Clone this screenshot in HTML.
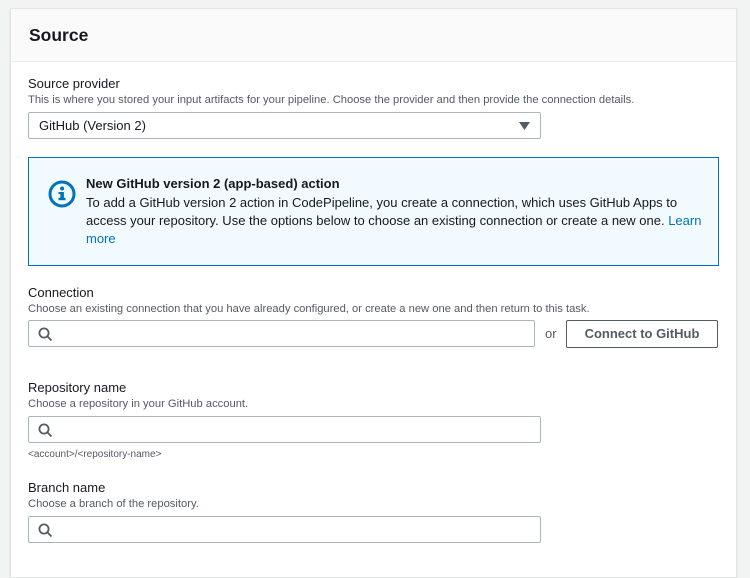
<!DOCTYPE html>
<html><head><meta charset="utf-8"><style>
*{margin:0;padding:0;box-sizing:border-box}
body{width:750px;height:559px;background:#f2f3f3;font-family:"Liberation Sans",sans-serif;color:#16191f;position:relative;overflow:hidden}
.panel{position:absolute;left:10px;top:8px;width:727px;height:570px;background:#fff;border:1px solid #e3e5e5;box-shadow:0 1px 1px rgba(0,28,36,.2)}
.hdr{position:absolute;left:0;top:0;right:0;height:53px;background:#fafafa;border-bottom:1px solid #eaeded}
.a{position:absolute;white-space:nowrap}
.h{left:18px;top:16px;font-size:17.5px;font-weight:bold}
.lbl{font-size:13px}
.desc{font-size:11.2px;color:#545b64}
.inp{position:absolute;height:27px;border:1px solid #aab7b8;border-radius:2px;background:#fff}
.inp svg{position:absolute;left:9px;top:6px}
</style></head><body>
<div class="panel">
<div class="hdr"><div class="a h">Source</div></div>
</div>
<div class="a lbl" style="left:28px;top:76px">Source provider</div>
<div class="a desc" style="left:28px;top:94px">This is where you stored your input artifacts for your pipeline. Choose the provider and then provide the connection details.</div>
<div class="inp" style="left:28px;top:112px;width:513px"><span class="a" style="left:10px;top:5px;font-size:13px">GitHub (Version 2)</span><svg style="left:490px;top:9px" width="11" height="8" viewBox="0 0 11 8"><path d="M0 0H11L5.5 8Z" fill="#545b64"/></svg></div>

<div class="a" style="left:28px;top:157px;width:691px;height:109px;background:#f1faff;border:1px solid #0073bb"></div>
<svg class="a" style="left:48px;top:180px" width="28" height="28" viewBox="0 0 28 28"><circle cx="14" cy="14" r="12" fill="none" stroke="#0073bb" stroke-width="3"/><rect x="12.3" y="12" width="3.6" height="8" fill="#0073bb"/><rect x="10.5" y="17.8" width="7" height="2.4" fill="#0073bb"/><rect x="10.5" y="12" width="3" height="2" fill="#0073bb"/><circle cx="14.1" cy="8.5" r="2" fill="#0073bb"/></svg>
<div class="a" style="left:86px;top:176px;font-size:13px;font-weight:bold">New GitHub version 2 (app-based) action</div>
<div class="a" style="left:86px;top:194px;font-size:13px;line-height:18px;white-space:normal;width:622px">To add a GitHub version 2 action in CodePipeline, you create a connection, which uses GitHub Apps to access your repository. Use the options below to choose an existing connection or create a new one. <span style="color:#0073bb">Learn more</span></div>

<div class="a lbl" style="left:28px;top:285px">Connection</div>
<div class="a desc" style="left:28px;top:303px">Choose an existing connection that you have already configured, or create a new one and then return to this task.</div>
<div class="inp" style="left:28px;top:320px;width:507px"><svg width="15" height="15" viewBox="0 0 15 15"><circle cx="6" cy="6" r="4.6" fill="none" stroke="#545b64" stroke-width="1.8"/><path d="M9.3 9.3L13.5 13.5" stroke="#545b64" stroke-width="1.8"/></svg></div>
<div class="a" style="left:545px;top:326px;font-size:13px;color:#545b64">or</div>
<div class="a" style="left:566px;top:320px;width:152px;height:28px;border:1px solid #545b64;border-radius:2px;font-size:13px;font-weight:bold;color:#545b64;text-align:center;line-height:26px">Connect to GitHub</div>

<div class="a lbl" style="left:28px;top:380px">Repository name</div>
<div class="a desc" style="left:28px;top:398px">Choose a repository in your GitHub account.</div>
<div class="inp" style="left:28px;top:416px;width:513px"><svg width="15" height="15" viewBox="0 0 15 15"><circle cx="6" cy="6" r="4.6" fill="none" stroke="#545b64" stroke-width="1.8"/><path d="M9.3 9.3L13.5 13.5" stroke="#545b64" stroke-width="1.8"/></svg></div>
<div class="a" style="left:28px;top:449px;font-size:10px;color:#545b64">&lt;account&gt;/&lt;repository-name&gt;</div>

<div class="a lbl" style="left:28px;top:480px">Branch name</div>
<div class="a desc" style="left:28px;top:498px">Choose a branch of the repository.</div>
<div class="inp" style="left:28px;top:516px;width:513px"><svg width="15" height="15" viewBox="0 0 15 15"><circle cx="6" cy="6" r="4.6" fill="none" stroke="#545b64" stroke-width="1.8"/><path d="M9.3 9.3L13.5 13.5" stroke="#545b64" stroke-width="1.8"/></svg></div>
</body></html>
